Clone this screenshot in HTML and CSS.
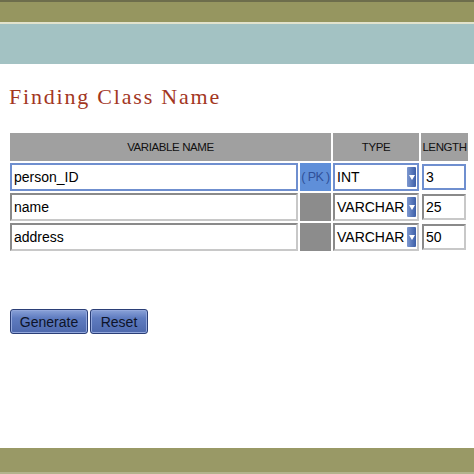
FILE: index.html
```html
<!DOCTYPE html>
<html>
<head>
<meta charset="utf-8">
<link rel="stylesheet" href="styles.css">
</head>
<body>
<div class="page">
  <div class="topbar"></div>
  <div class="teal"></div>
  <h1 class="title">Finding Class Name</h1>
  <div class="grid">
    <div class="th span2">VARIABLE NAME</div>
    <div class="th">TYPE</div>
    <div class="th">LENGTH</div>

    <div class="inp active">person_ID</div>
    <div class="pk on">( PK )</div>
    <div class="sel active"><span>INT</span><span class="arrow"><svg width="6" height="5" viewBox="0 0 6 5"><path d="M0 0H6L3 5Z" fill="#fff"/></svg></span></div>
    <div class="inp len active">3</div>

    <div class="inp">name</div>
    <div class="pk"></div>
    <div class="sel"><span>VARCHAR</span><span class="arrow"><svg width="6" height="5" viewBox="0 0 6 5"><path d="M0 0H6L3 5Z" fill="#fff"/></svg></span></div>
    <div class="inp len">25</div>

    <div class="inp">address</div>
    <div class="pk"></div>
    <div class="sel"><span>VARCHAR</span><span class="arrow"><svg width="6" height="5" viewBox="0 0 6 5"><path d="M0 0H6L3 5Z" fill="#fff"/></svg></span></div>
    <div class="inp len">50</div>
  </div>
  <div class="buttons">
    <button class="btn gen">Generate</button>
    <button class="btn reset">Reset</button>
  </div>
  <div class="footer"></div>
</div>
</body>
</html>
```

FILE: styles.css
```css
html, body {
  margin: 0;
  padding: 0;
  background: #fff;
}
.page {
  height: 474px;
  display: flex;
  flex-direction: column;
  font-family: "Liberation Sans", Arial, sans-serif;
}
.topbar {
  height: 20px;
  background: #969660;
  border-top: 2px solid #6d6d4c;
  border-bottom: 2px solid #e2e2cc;
}
.teal {
  height: 40px;
  background: #a3c2c3;
}
.title {
  margin: 20px 0 23px 9px;
  font-family: "Liberation Serif", "Times New Roman", serif;
  font-weight: normal;
  font-size: 22px;
  line-height: 26px;
  letter-spacing: 1.8px;
  color: #a3371f;
}
.grid {
  display: grid;
  grid-template-columns: 288px 31px 86px 47px;
  grid-auto-rows: 28px;
  gap: 2px;
  margin-left: 10px;
}
.th {
  background: #a0a0a0;
  color: #111;
  font-size: 11.5px;
  letter-spacing: -0.4px;
  display: flex;
  align-items: center;
  justify-content: center;
  white-space: nowrap;
}
.span2 {
  grid-column: span 2;
}
.inp {
  box-sizing: border-box;
  background: #fff;
  border: 2px solid #8a8a8a;
  border-right-color: #c8c8c8;
  border-bottom-color: #c8c8c8;
  font-size: 14px;
  color: #000;
  display: flex;
  align-items: center;
  padding-left: 2px;
}
.inp.active {
  border-color: #6f8fcf;
}
.len {
  margin: 1px 2px 1px 1px;
}
.pk {
  background: #8c8c8c;
  display: flex;
  align-items: center;
  justify-content: center;
  font-size: 12.5px;
  color: #2f4f98;
  white-space: nowrap;
  letter-spacing: -0.6px;
  overflow: visible;
}
.pk.on {
  background: #5f8fd9;
}
.sel {
  box-sizing: border-box;
  border: 2px solid #8a8a8a;
  border-right-color: #c8c8c8;
  border-bottom-color: #c8c8c8;
  background: #fff;
  display: flex;
  align-items: center;
  justify-content: space-between;
  padding: 0 1px 0 2px;
  font-size: 14px;
  color: #000;
}
.sel.active {
  border-color: #6f8fcf;
}
.arrow {
  width: 9px;
  height: 20px;
  background: linear-gradient(to right, #7d98d0, #3b5ea8);
  display: flex;
  align-items: center;
  justify-content: center;
  border-radius: 1px;
  flex-shrink: 0;
}
.buttons {
  margin: 58px 0 0 10px;
  display: flex;
  gap: 2px;
}
.btn {
  height: 25px;
  box-sizing: border-box;
  border: 1px solid #2b3f77;
  border-radius: 3px;
  background: linear-gradient(to bottom, #8aa2d8 0%, #5f7cc0 35%, #4d68ac 100%);
  box-shadow: inset 0 0 0 1px #93a8dc;
  font-family: "Liberation Sans", Arial, sans-serif;
  font-size: 14px;
  color: #0d1328;
  padding: 0;
}
.gen {
  width: 78px;
}
.reset {
  width: 58px;
}
.footer {
  margin-top: auto;
  height: 24px;
  background: #999966;
  border-bottom: 2px solid #b3b38d;
}
```
